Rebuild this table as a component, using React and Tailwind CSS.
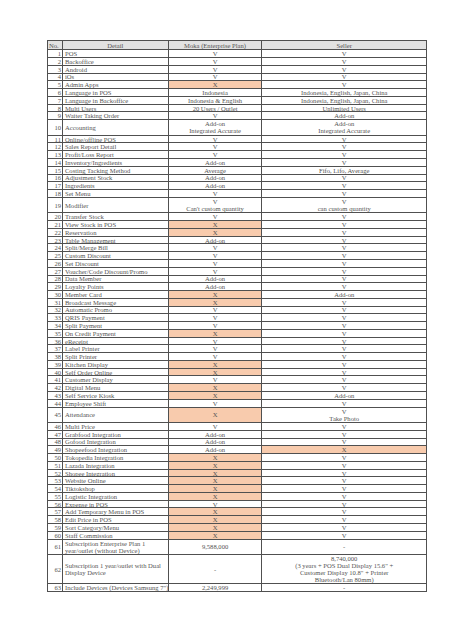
import React from 'react';

// ── Data ───────────────────────────────────────────────────────────────────────

const rows = [
  [1, 'POS', 'V', 'V'],
  [2, 'Backoffice', 'V', 'V'],
  [3, 'Android', 'V', 'V'],
  [4, 'iOs', 'V', 'V'],
  [5, 'Admin Apps', 'X', 'V'],
  [6, 'Language in POS', 'Indonesia', 'Indonesia, English, Japan, China'],
  [7, 'Language in Backoffice', 'Indonesia & English', 'Indonesia, English, Japan, China'],
  [8, 'Multi Users', '20 Users / Outlet', 'Unlimited Users'],
  [9, 'Waiter Taking Order', 'V', 'Add-on'],
  [10, 'Accounting', ['Add-on', 'Integrated Accurate'], ['Add-on', 'Integrated Accurate'], 'double'],
  [11, 'Online/offline POS', 'V', 'V'],
  [12, 'Sales Report Detail', 'V', 'V'],
  [13, 'Profit/Loss Report', 'V', 'V'],
  [14, 'Inventory/Ingredients', 'Add-on', 'V'],
  [15, 'Costing Tacking Method', 'Average', 'Fifo, Lifo, Average'],
  [16, 'Adjustment Stock', 'Add-on', 'V'],
  [17, 'Ingredients', 'Add-on', 'V'],
  [18, 'Set Menu', 'V', 'V'],
  [19, 'Modifier', ['V', "Can't custom quantity"], ['V', 'can custom quantity'], 'double'],
  [20, 'Transfer Stock', 'V', 'V'],
  [21, 'View Stock in POS', 'X', 'V'],
  [22, 'Reservation', 'X', 'V'],
  [23, 'Table Management', 'Add-on', 'V'],
  [24, 'Split/Merge Bill', 'V', 'V'],
  [25, 'Custom Discount', 'V', 'V'],
  [26, 'Set Discount', 'V', 'V'],
  [27, 'Voucher/Code Discount/Promo', 'V', 'V'],
  [28, 'Data Member', 'Add-on', 'V'],
  [29, 'Loyalty Points', 'Add-on', 'V'],
  [30, 'Member Card', 'X', 'Add-on'],
  [31, 'Broadcast Message', 'X', 'V'],
  [32, 'Automatic Promo', 'V', 'V'],
  [33, 'QRIS Payment', 'V', 'V'],
  [34, 'Split Payment', 'V', 'V'],
  [35, 'On Credit Payment', 'X', 'V'],
  [36, 'eReceipt', 'V', 'V'],
  [37, 'Label Printer', 'V', 'V'],
  [38, 'Split Printer', 'V', 'V'],
  [39, 'Kitchen Display', 'X', 'V'],
  [40, 'Self Order Online', 'X', 'V'],
  [41, 'Customer Display', 'V', 'V'],
  [42, 'Digital Menu', 'X', 'V'],
  [43, 'Self Service Kiosk', 'X', 'Add-on'],
  [44, 'Employee Shift', 'V', 'V'],
  [45, 'Attendance', 'X', ['V', 'Take Photo'], 'double'],
  [46, 'Multi Price', 'V', 'V'],
  [47, 'Grabfood Integration', 'Add-on', 'V'],
  [48, 'Gofood Integration', 'Add-on', 'V'],
  [49, 'Shopeefood Integration', 'Add-on', 'X'],
  [50, 'Tokopedia Integration', 'X', 'V'],
  [51, 'Lazada Integration', 'X', 'V'],
  [52, 'Shopee Integration', 'X', 'V'],
  [53, 'Website Online', 'X', 'V'],
  [54, 'Tiktokshop', 'X', 'V'],
  [55, 'Logistic Integration', 'X', 'V'],
  [56, 'Expense in POS', 'V', 'V'],
  [57, 'Add Temporary Menu in POS', 'X', 'V'],
  [58, 'Edit Price in POS', 'X', 'V'],
  [59, 'Sort Category/Menu', 'X', 'V'],
  [60, 'Staff Commission', 'X', 'V'],
  [61, ['Subscription Enterprise Plan 1', 'year/outlet (without Device)'], '9,588,000', '-', 'double'],
  [62, ['Subscription 1 year/outlet with Dual', 'Display Device'], '-',
    ['8,740,000', '(3 years + POS Dual Display 15.6" +', 'Customer Display 10.8" + Printer', 'Bluetooth/Lan 80mm)'], 'quad'],
  [63, 'Include Devices (Devices Samsung 7")', '2,249,999', '-'],
];

const heights = {
  single: 'h-[7.77px]',
  double: 'h-[15.54px]',
  quad: 'h-[29px]',
};

function Lines({ value }) {
  if (Array.isArray(value)) {
    return (
      <div className="flex flex-col">
        {value.map((v, i) => <span key={i}>{v}</span>)}
      </div>
    );
  }
  return <span className="whitespace-nowrap">{value}</span>;
}

// ── Row ────────────────────────────────────────────────────────────────────────

function Row({ no, detail, moka, seller, size = 'single' }) {
  const h = heights[size];
  const cell = `${h} border-r border-b border-[#505050] flex items-center overflow-hidden`;
  const orange = (v) => (v === 'X' ? 'bg-[#f8cbad]' : 'bg-white');
  return (
    <div className="flex">
      <div className={`${cell} w-[15px] justify-end pr-[1px] border-r-[1.5px]`}>{no}</div>
      <div className={`${cell} w-[106px] justify-start pl-[2px] text-left`}>
        <Lines value={detail} />
      </div>
      <div className={`${cell} w-[94px] justify-center text-center ${orange(moka)}`}>
        <Lines value={moka} />
      </div>
      <div className={`${cell} w-[165px] justify-center text-center ${orange(seller)}`}>
        <Lines value={seller} />
      </div>
    </div>
  );
}

// ── Page ───────────────────────────────────────────────────────────────────────

export default function App() {
  return (
    <div
      className="min-h-[632px] w-[474px] bg-white pl-[47px] pt-[40px] text-[#555] text-[6.6px] leading-[7px]"
      style={{ fontFamily: '"Liberation Serif", serif' }}
    >
      <div className="w-[380px] border-l border-t border-[#505050]">
        <div className="flex bg-[#e2e2e2]">
          <div className="h-[9.3px] w-[15px] border-r-[1.5px] border-b border-[#505050] flex items-center pl-[1px]">No.</div>
          <div className="h-[9.3px] w-[106px] border-r border-b border-[#505050] flex items-center justify-center">Detail</div>
          <div className="h-[9.3px] w-[94px] border-r border-b border-[#505050] flex items-center justify-center">Moka (Enterprise Plan)</div>
          <div className="h-[9.3px] w-[165px] border-r border-b border-[#505050] flex items-center justify-center">Seller</div>
        </div>
        {rows.map(([no, detail, moka, seller, size]) => (
          <Row key={no} no={no} detail={detail} moka={moka} seller={seller} size={size} />
        ))}
      </div>
    </div>
  );
}
